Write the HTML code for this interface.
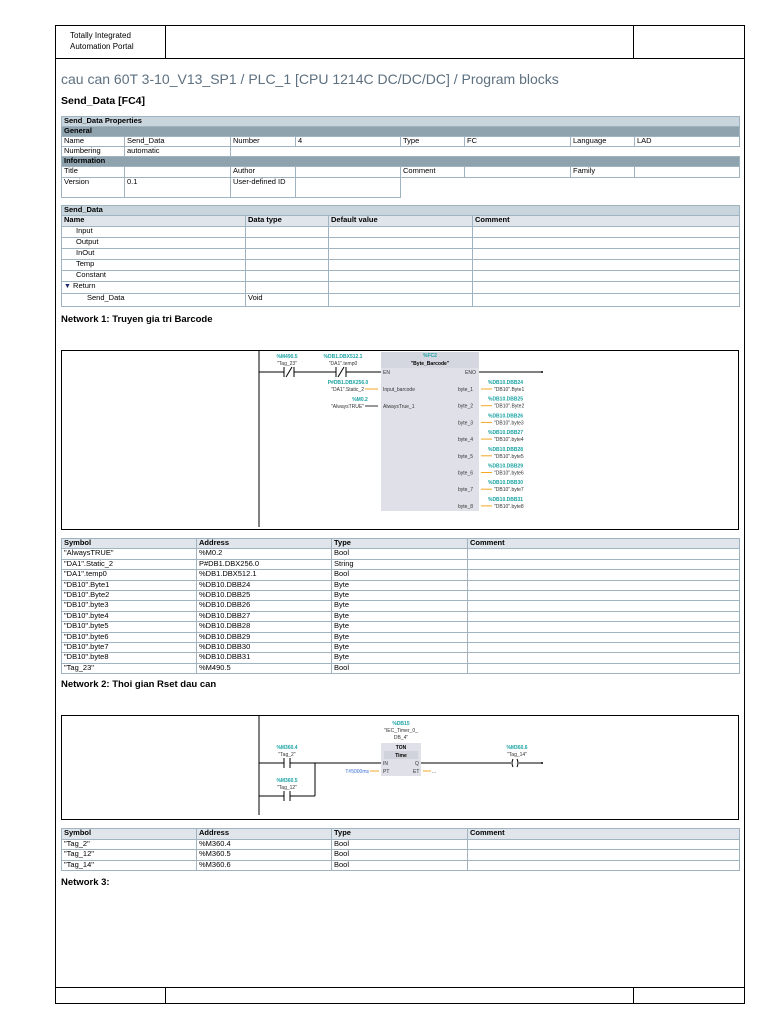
<!DOCTYPE html>
<html><head><meta charset="utf-8"><style>
*{margin:0;padding:0;box-sizing:border-box}
body{width:768px;height:1024px;background:#fff;position:relative;font-family:"Liberation Sans",sans-serif;color:#000;overflow:hidden}
.a{position:absolute}
table{position:absolute;border-collapse:collapse;table-layout:fixed;font-size:7.5px;line-height:1}
td{border:1px solid #9fb3c0;padding:0 2px;vertical-align:top;overflow:hidden;white-space:nowrap}
.h1 td{background:#c9d5dd;border-color:#9fb3c0}
.h2 td{background:#8fa3af}
.ch td{background:#dfe5ea}
.b{font-weight:bold}
</style></head><body>
<div class="a" style="left:55px;top:25px;width:690px;height:979px;border:1px solid #000"></div>
<div class="a" style="left:55px;top:58px;width:690px;border-top:1px solid #000"></div>
<div class="a" style="left:165px;top:25px;height:33px;border-left:1px solid #000"></div>
<div class="a" style="left:633px;top:25px;height:33px;border-left:1px solid #000"></div>
<div class="a" style="left:55px;top:987px;width:690px;border-top:1px solid #000"></div>
<div class="a" style="left:165px;top:987px;height:17px;border-left:1px solid #000"></div>
<div class="a" style="left:633px;top:987px;height:17px;border-left:1px solid #000"></div>
<div class="a" style="left:70px;top:30px;font-size:8px;line-height:11px">Totally Integrated<br>Automation Portal</div>
<div class="a" style="left:61px;top:71px;font-size:14px;color:#5d7080">cau can 60T 3-10_V13_SP1 / PLC_1 [CPU 1214C DC/DC/DC] / Program blocks</div>
<div class="a b" style="left:61px;top:95px;font-size:10.5px">Send_Data [FC4]</div>

<table style="left:61px;top:116px;width:678px">
<colgroup><col style="width:63px"><col style="width:106px"><col style="width:65px"><col style="width:105px"><col style="width:64px"><col style="width:106px"><col style="width:64px"><col style="width:105px"></colgroup>
<tr class="h1" style="height:10px"><td colspan="8" class="b">Send_Data Properties</td></tr>
<tr class="h2" style="height:10px"><td colspan="8" class="b">General</td></tr>
<tr style="height:10px"><td>Name</td><td>Send_Data</td><td>Number</td><td>4</td><td>Type</td><td>FC</td><td>Language</td><td>LAD</td></tr>
<tr style="height:10px"><td>Numbering</td><td>automatic</td><td colspan="6" style="border:none"></td></tr>
<tr class="h2" style="height:10px"><td colspan="8" class="b">Information</td></tr>
<tr style="height:11px"><td>Title</td><td></td><td>Author</td><td></td><td>Comment</td><td></td><td>Family</td><td></td></tr>
<tr style="height:20px"><td>Version</td><td>0.1</td><td style="white-space:normal">User-defined ID</td><td></td><td colspan="4" style="border:none"></td></tr>
</table>

<table style="left:61px;top:205px;width:678px">
<colgroup><col style="width:184px"><col style="width:83px"><col style="width:144px"><col style="width:267px"></colgroup>
<tr class="h1" style="height:10px"><td colspan="4" class="b">Send_Data</td></tr>
<tr class="ch" style="height:11px"><td class="b">Name</td><td class="b">Data type</td><td class="b">Default value</td><td class="b">Comment</td></tr>
<tr style="height:11px"><td style="padding-left:14px">Input</td><td></td><td></td><td></td></tr>
<tr style="height:11px"><td style="padding-left:14px">Output</td><td></td><td></td><td></td></tr>
<tr style="height:11px"><td style="padding-left:14px">InOut</td><td></td><td></td><td></td></tr>
<tr style="height:11px"><td style="padding-left:14px">Temp</td><td></td><td></td><td></td></tr>
<tr style="height:11px"><td style="padding-left:14px">Constant</td><td></td><td></td><td></td></tr>
<tr style="height:12px"><td><span style="color:#1a2a6a;font-size:7px">&#9660;</span> Return</td><td></td><td></td><td></td></tr>
<tr style="height:13px"><td style="padding-left:25px">Send_Data</td><td>Void</td><td></td><td></td></tr>
</table>

<div class="a b" style="left:61px;top:314px;font-size:9.5px">Network 1: Truyen gia tri Barcode</div>
<div class="a" style="left:61px;top:350px;width:678px;height:180px;border:1px solid #000"></div>

<table style="left:61px;top:538px;width:678px">
<colgroup><col style="width:135px"><col style="width:135px"><col style="width:136px"><col style="width:272px"></colgroup>
<tr class="ch" style="height:10.4px"><td class="b">Symbol</td><td class="b">Address</td><td class="b">Type</td><td class="b">Comment</td></tr>
<tr style="height:10.4px"><td>"AlwaysTRUE"</td><td>%M0.2</td><td>Bool</td><td></td></tr>
<tr style="height:10.4px"><td>"DA1".Static_2</td><td>P#DB1.DBX256.0</td><td>String</td><td></td></tr>
<tr style="height:10.4px"><td>"DA1".temp0</td><td>%DB1.DBX512.1</td><td>Bool</td><td></td></tr>
<tr style="height:10.4px"><td>"DB10".Byte1</td><td>%DB10.DBB24</td><td>Byte</td><td></td></tr>
<tr style="height:10.4px"><td>"DB10".Byte2</td><td>%DB10.DBB25</td><td>Byte</td><td></td></tr>
<tr style="height:10.4px"><td>"DB10".byte3</td><td>%DB10.DBB26</td><td>Byte</td><td></td></tr>
<tr style="height:10.4px"><td>"DB10".byte4</td><td>%DB10.DBB27</td><td>Byte</td><td></td></tr>
<tr style="height:10.4px"><td>"DB10".byte5</td><td>%DB10.DBB28</td><td>Byte</td><td></td></tr>
<tr style="height:10.4px"><td>"DB10".byte6</td><td>%DB10.DBB29</td><td>Byte</td><td></td></tr>
<tr style="height:10.4px"><td>"DB10".byte7</td><td>%DB10.DBB30</td><td>Byte</td><td></td></tr>
<tr style="height:10.4px"><td>"DB10".byte8</td><td>%DB10.DBB31</td><td>Byte</td><td></td></tr>
<tr style="height:10.4px"><td>"Tag_23"</td><td>%M490.5</td><td>Bool</td><td></td></tr>
</table>

<div class="a b" style="left:61px;top:679px;font-size:9.5px">Network 2: Thoi gian Rset dau can</div>
<div class="a" style="left:61px;top:715px;width:678px;height:105px;border:1px solid #000"></div>

<table style="left:61px;top:828px;width:678px">
<colgroup><col style="width:135px"><col style="width:135px"><col style="width:136px"><col style="width:272px"></colgroup>
<tr class="ch" style="height:10.5px"><td class="b">Symbol</td><td class="b">Address</td><td class="b">Type</td><td class="b">Comment</td></tr>
<tr style="height:10.5px"><td>"Tag_2"</td><td>%M360.4</td><td>Bool</td><td></td></tr>
<tr style="height:10.5px"><td>"Tag_12"</td><td>%M360.5</td><td>Bool</td><td></td></tr>
<tr style="height:10.5px"><td>"Tag_14"</td><td>%M360.6</td><td>Bool</td><td></td></tr>
</table>
<div class="a b" style="left:61px;top:877px;font-size:9.5px">Network 3:</div>

<svg class="a" style="left:0;top:0" width="768" height="1024" font-family="Liberation Sans, sans-serif" font-size="5">
<g stroke="#000" stroke-width="1" fill="none">
<line x1="259" y1="350" x2="259" y2="527"/>
<line x1="259" y1="372" x2="284" y2="372"/><line x1="284" y1="367" x2="284" y2="377"/><line x1="294" y1="367" x2="294" y2="377"/><line x1="286" y1="377" x2="292" y2="367"/>
<line x1="294" y1="372" x2="336" y2="372"/><line x1="336" y1="367" x2="336" y2="377"/><line x1="346" y1="367" x2="346" y2="377"/><line x1="338" y1="377" x2="344" y2="367"/>
<line x1="346" y1="372" x2="381" y2="372"/>
<line x1="479" y1="372" x2="541" y2="372"/>
</g>
<circle cx="542" cy="372" r="1" fill="#000"/>
<rect x="381" y="352" width="98" height="159" fill="#dfe0e8"/>
<rect x="381" y="352" width="98" height="16" fill="#d5d7e0"/>
<g fill="#1aa3a3" font-weight="bold" text-anchor="middle">
<text x="287" y="358">%M490.5</text><text x="343" y="358">%DB1.DBX512.1</text><text x="430" y="357">%FC2</text>
<text x="348" y="384">P#DB1.DBX256.0</text><text x="360" y="401">%M0.2</text>
</g>
<g fill="#333" text-anchor="middle"><text x="287" y="365">"Tag_23"</text><text x="343" y="365">"DA1".temp0</text></g>
<text x="430" y="365" text-anchor="middle" font-weight="bold">"Byte_Barcode"</text>
<g fill="#333"><text x="383" y="374">EN</text><text x="465" y="374">ENO</text>
<text x="383" y="391">Input_barcode</text><text x="383" y="408">AlwaysTrue_1</text></g>
<g fill="#333" text-anchor="end"><text x="364" y="391">"DA1".Static_2</text><text x="364" y="408">"AlwaysTRUE"</text></g>
<line x1="365" y1="389" x2="378" y2="389" stroke="#f5a623"/><line x1="365" y1="406" x2="378" y2="406" stroke="#333"/>
<g>
<g transform="translate(0,0)"><text x="458" y="391" fill="#333">byte_1</text><line x1="481" y1="389" x2="492" y2="389" stroke="#f5a623"/><text x="488" y="384" fill="#1aa3a3" font-weight="bold">%DB10.DBB24</text><text x="494" y="391" fill="#333">"DB10".Byte1</text></g>
<g transform="translate(0,16.7)"><text x="458" y="391" fill="#333">byte_2</text><line x1="481" y1="389" x2="492" y2="389" stroke="#f5a623"/><text x="488" y="384" fill="#1aa3a3" font-weight="bold">%DB10.DBB25</text><text x="494" y="391" fill="#333">"DB10".Byte2</text></g>
<g transform="translate(0,33.4)"><text x="458" y="391" fill="#333">byte_3</text><line x1="481" y1="389" x2="492" y2="389" stroke="#f5a623"/><text x="488" y="384" fill="#1aa3a3" font-weight="bold">%DB10.DBB26</text><text x="494" y="391" fill="#333">"DB10".byte3</text></g>
<g transform="translate(0,50.1)"><text x="458" y="391" fill="#333">byte_4</text><line x1="481" y1="389" x2="492" y2="389" stroke="#f5a623"/><text x="488" y="384" fill="#1aa3a3" font-weight="bold">%DB10.DBB27</text><text x="494" y="391" fill="#333">"DB10".byte4</text></g>
<g transform="translate(0,66.8)"><text x="458" y="391" fill="#333">byte_5</text><line x1="481" y1="389" x2="492" y2="389" stroke="#f5a623"/><text x="488" y="384" fill="#1aa3a3" font-weight="bold">%DB10.DBB28</text><text x="494" y="391" fill="#333">"DB10".byte5</text></g>
<g transform="translate(0,83.5)"><text x="458" y="391" fill="#333">byte_6</text><line x1="481" y1="389" x2="492" y2="389" stroke="#f5a623"/><text x="488" y="384" fill="#1aa3a3" font-weight="bold">%DB10.DBB29</text><text x="494" y="391" fill="#333">"DB10".byte6</text></g>
<g transform="translate(0,100.2)"><text x="458" y="391" fill="#333">byte_7</text><line x1="481" y1="389" x2="492" y2="389" stroke="#f5a623"/><text x="488" y="384" fill="#1aa3a3" font-weight="bold">%DB10.DBB30</text><text x="494" y="391" fill="#333">"DB10".byte7</text></g>
<g transform="translate(0,116.9)"><text x="458" y="391" fill="#333">byte_8</text><line x1="481" y1="389" x2="492" y2="389" stroke="#f5a623"/><text x="488" y="384" fill="#1aa3a3" font-weight="bold">%DB10.DBB31</text><text x="494" y="391" fill="#333">"DB10".byte8</text></g>
</g>

<g stroke="#000" stroke-width="1" fill="none">
<line x1="259" y1="715" x2="259" y2="815"/>
<line x1="259" y1="763" x2="284" y2="763"/><line x1="284" y1="758" x2="284" y2="768"/><line x1="290" y1="758" x2="290" y2="768"/><line x1="290" y1="763" x2="381" y2="763"/>
<line x1="259" y1="796" x2="284" y2="796"/><line x1="284" y1="791" x2="284" y2="801"/><line x1="290" y1="791" x2="290" y2="801"/><line x1="290" y1="796" x2="315" y2="796"/>
<line x1="315" y1="763" x2="315" y2="796"/>
<line x1="421" y1="763" x2="511" y2="763"/>
<path d="M513 759 Q511 763 513 767 M517 759 Q519 763 517 767"/>
<line x1="519" y1="763" x2="541" y2="763"/>
</g>
<circle cx="542" cy="763" r="1" fill="#000"/>
<rect x="381" y="743" width="40" height="33" fill="#dfe0e8"/>
<rect x="384" y="751" width="34" height="8" fill="#d0d3dc"/>
<g fill="#1aa3a3" font-weight="bold" text-anchor="middle">
<text x="287" y="749">%M360.4</text><text x="287" y="782">%M360.5</text><text x="401" y="725">%DB15</text><text x="517" y="749">%M360.6</text>
</g>
<g fill="#333" text-anchor="middle">
<text x="287" y="756">"Tag_2"</text><text x="287" y="789">"Tag_12"</text><text x="401" y="732">"IEC_Timer_0_</text><text x="401" y="739">DB_4"</text><text x="517" y="756">"Tag_14"</text>
</g>
<text x="401" y="749" text-anchor="middle" font-weight="bold">TON</text><text x="401" y="757" text-anchor="middle" font-weight="bold">Time</text>
<g fill="#333"><text x="383" y="765">IN</text><text x="383" y="773">PT</text><text x="415" y="765">Q</text><text x="413" y="773">ET</text><text x="432" y="773">...</text></g>
<text x="369" y="773" fill="#3a6fd8" text-anchor="end">T#5000ms</text>
<line x1="370" y1="771" x2="379" y2="771" stroke="#f5a623"/><line x1="423" y1="771" x2="431" y2="771" stroke="#f5a623"/>
</svg>
</body></html>
